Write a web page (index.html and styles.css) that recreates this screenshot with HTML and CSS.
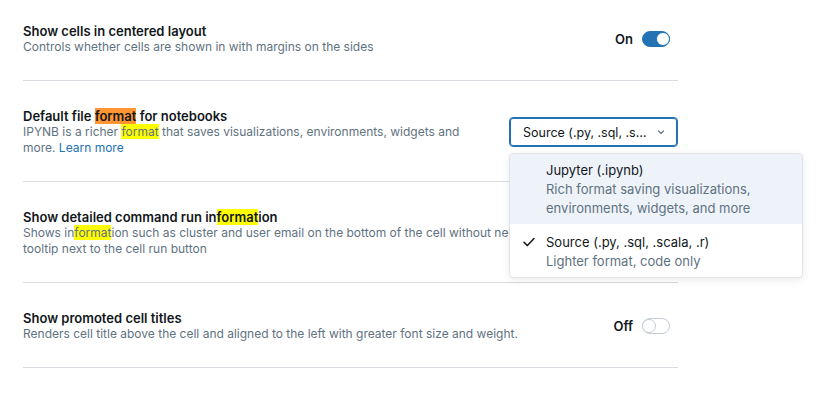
FILE: index.html
```html
<!DOCTYPE html>
<html>
<head>
<meta charset="utf-8">
<link rel="stylesheet" href="styles.css">
</head>
<body>
<div class="settings">
  <div class="row">
    <div class="text">
      <div class="title">Show cells in centered layout</div>
      <div class="desc">Controls whether cells are shown in with margins on the sides</div>
    </div>
    <div class="switch-group">
      <span class="switch-label">On</span>
      <span class="switch on"><span class="knob"></span></span>
    </div>
  </div>

  <div class="row">
    <div class="text">
      <div class="title">Default file <mark class="current">format</mark> for notebooks</div>
      <div class="desc">IPYNB is a richer <mark>format</mark> that saves visualizations, environments, widgets and more. <a class="link" href="#">Learn more</a></div>
    </div>
    <div class="select-wrap">
      <div class="select">
        <span class="select-value">Source (.py, .sql, .scala, .r)</span>
        <svg class="chev" width="10" height="10" viewBox="0 0 10 10"><path d="M2.5 4 L5 6.5 L7.5 4" fill="none" stroke="#6b7a88" stroke-width="1.2" stroke-linecap="round" stroke-linejoin="round"/></svg>
      </div>
      <div class="menu">
        <div class="option active">
          <span class="check"></span>
          <div class="opt-text">
            <div class="opt-title">Jupyter (.ipynb)</div>
            <div class="opt-desc">Rich format saving visualizations, environments, widgets, and more</div>
          </div>
        </div>
        <div class="option">
          <span class="check"><svg width="14" height="14" viewBox="0 0 14 14"><path d="M2 7.3 L5.4 10.6 L12 3.6" fill="none" stroke="#11171c" stroke-width="1.5" stroke-linecap="round" stroke-linejoin="round"/></svg></span>
          <div class="opt-text">
            <div class="opt-title">Source (.py, .sql, .scala, .r)</div>
            <div class="opt-desc">Lighter format, code only</div>
          </div>
        </div>
      </div>
    </div>
  </div>

  <div class="row">
    <div class="text">
      <div class="title">Show detailed command run in<mark>format</mark>ion</div>
      <div class="desc nowrap">Shows in<mark>format</mark>ion such as cluster and user email on the bottom of the cell without needing to hover over the<br>tooltip next to the cell run button</div>
    </div>
    <div class="switch-group">
      <span class="switch-label">On</span>
      <span class="switch on"><span class="knob"></span></span>
    </div>
  </div>

  <div class="row">
    <div class="text">
      <div class="title">Show promoted cell titles</div>
      <div class="desc">Renders cell title above the cell and aligned to the left with greater font size and weight.</div>
    </div>
    <div class="switch-group">
      <span class="switch-label">Off</span>
      <span class="switch"><span class="knob"></span></span>
    </div>
  </div>
</div>
</body>
</html>
```

FILE: styles.css
```css
html, body {
  margin: 0;
  padding: 0;
  background: #ffffff;
}
body {
  font-family: Inter, "Liberation Sans", Arial, sans-serif;
  font-size: 13px;
  color: #11171c;
  overflow: hidden;
}
.settings {
  width: 655px;
  margin: -4px 0 0 23px;
}
.row {
  display: flex;
  align-items: center;
  gap: 40px;
  padding: 27px 0 25px;
  border-bottom: 1px solid #d8dde2;
}
.text {
  flex: 1;
  min-width: 0;
}
.title {
  font-weight: 600;
  line-height: 16px;
  color: #11171c;
}
.desc {
  line-height: 16px;
  color: #5f7281;
  font-size: 12px;
}
.desc.nowrap {
  white-space: nowrap;
}
mark {
  background: #ffff00;
  color: inherit;
  padding: 0;
}
mark.current {
  background: #ff9632;
}
.link {
  color: #2272b4;
  text-decoration: none;
}
.switch-group {
  display: flex;
  align-items: center;
  gap: 9px;
  margin-right: 8px;
}
.switch-label {
  font-weight: 600;
  font-size: 13px;
  color: #11171c;
}
.switch {
  box-sizing: border-box;
  width: 28px;
  height: 16px;
  border-radius: 8px;
  border: 1px solid #c4ccd4;
  background: #ffffff;
  display: flex;
  align-items: center;
  justify-content: flex-start;
}
.switch .knob {
  box-sizing: border-box;
  width: 14px;
  height: 14px;
  border-radius: 50%;
  background: #ffffff;
  border: 1px solid #c4ccd4;
  margin-left: -1px;
}
.switch.on {
  background: #2272b4;
  border-color: #2272b4;
  justify-content: flex-end;
}
.switch.on .knob {
  border-color: #2272b4;
  margin-left: 0;
  margin-right: -1px;
}
.select-wrap {
  position: relative;
  width: 169px;
}
.select {
  box-sizing: border-box;
  height: 30px;
  border: 1px solid #2272b4;
  box-shadow: 0 0 0 1px #2272b4 inset;
  border-radius: 4px;
  display: flex;
  align-items: center;
  padding: 0 11px 0 13px;
  gap: 7px;
}
.select-value {
  flex: 1;
  min-width: 0;
  white-space: nowrap;
  overflow: hidden;
  text-overflow: ellipsis;
  color: #11171c;
  font-size: 12.5px;
}
.chev {
  flex: none;
}
.menu {
  position: absolute;
  left: 0;
  top: 36px;
  width: 294px;
  box-sizing: border-box;
  background: #ffffff;
  border: 1px solid #dfe4e8;
  border-radius: 4px;
  box-shadow: 0 2px 8px rgba(0, 0, 0, 0.08);
  overflow: hidden;
  z-index: 10;
}
.option {
  display: flex;
  gap: 8px;
  padding: 6px 12px 6px 12px;
}
.option + .option {
  padding-top: 8px;
}
.option.active {
  background: #eef3f9;
}
.check {
  width: 16px;
  height: 20px;
  flex: none;
  display: flex;
  align-items: center;
}
.opt-title {
  line-height: 20px;
  color: #11171c;
}
.opt-desc {
  line-height: 19px;
  color: #5f7281;
}
```
